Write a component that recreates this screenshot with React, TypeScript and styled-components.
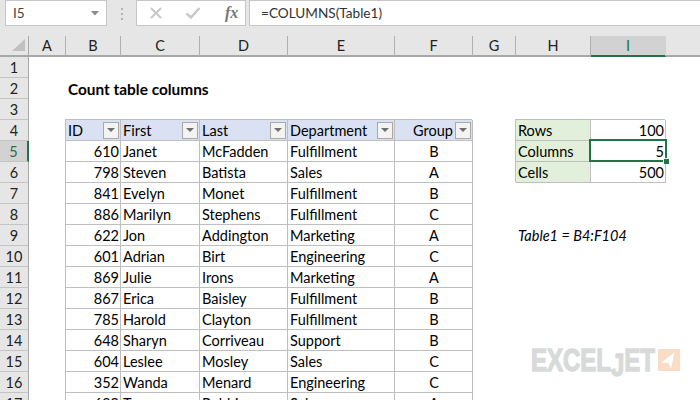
import React from 'react'
import styled, { createGlobalStyle } from 'styled-components'

const GlobalStyle = createGlobalStyle`
    html, body { margin: 0; padding: 0; background: #fff; }
    body { font-family: Lato, "Open Sans", sans-serif; }
`

const Page = styled.div`
    position: relative;
    width: 700px;
    height: 400px;
    overflow: hidden;
    background: #fff;
    color: #000;
    font-size: 14.5px;
`

const Toolbar = styled.div`
    display: flex;
    align-items: flex-start;
    height: 36px;
    padding-left: 5px;
    box-sizing: border-box;
    background: #e6e6e6;
    font-size: 13.6px;
`
const Box = styled.div`
    display: flex;
    align-items: center;
    height: 26px;
    box-sizing: border-box;
    background: #fff;
    border: 1px solid #c6c6c6;
`
const NameBox = styled(Box)`
    width: 102px;
    padding: 0 6px 0 7px;
    justify-content: space-between;
    color: #444;
`
const Dots = styled.div`
    display: flex;
    flex-direction: column;
    gap: 3px;
    width: 2px;
    margin: 8px 13px 0 14px;
    & i { display: block; width: 2px; height: 2px; background: #b4b4b4; }
`
const ActionBox = styled(Box)`
    width: 110px;
    padding-left: 12px;
    box-sizing: border-box;
    gap: 22px;
`
const FxLabel = styled.span`
    margin-left: 2px;
    font: italic bold 16px "Liberation Serif", serif;
    color: #777;
`
const FormulaBox = styled(Box)`
    flex: 1;
    margin-left: 3px;
    padding-left: 11px;
    border-right: 0;
    color: #333;
`

const Sheet = styled.div`
    display: grid;
    grid-template-columns: 29px 37px 55px 79px 88px 107px 78px 43px 75px 75px 1fr;
    grid-auto-rows: 21px;
`
const Corner = styled.div`
    display: flex;
    align-items: flex-end;
    justify-content: flex-end;
    padding: 0 3px 4px 0;
    box-sizing: border-box;
    background: #e6e6e6;
    border-right: 1px solid #a8a8a8;
    border-bottom: 2px solid #a8a8a8;
`
const ColHead = styled.div<{ $active?: boolean }>`
    display: flex;
    align-items: center;
    justify-content: center;
    box-sizing: border-box;
    background: ${p => (p.$active ? '#d2d2d2' : '#e6e6e6')};
    color: ${p => (p.$active ? '#217346' : '#222')};
    border-right: 1px solid ${p => (p.$active ? '#d2d2d2' : '#b0b0b0')};
    border-bottom: 2px solid ${p => (p.$active ? '#217346' : '#a8a8a8')};
`
const ColFill = styled(ColHead)`
    border-right: 0;
`
const RowHead = styled.div<{ $active?: boolean }>`
    display: flex;
    align-items: center;
    justify-content: center;
    box-sizing: border-box;
    background: ${p => (p.$active ? '#d2d2d2' : '#e6e6e6')};
    color: ${p => (p.$active ? '#217346' : '#222')};
    border-right: ${p => (p.$active ? '2px solid #217346' : '1px solid #a8a8a8')};
    border-bottom: 1px solid #c4c4c4;
`
const Cell = styled.div<{ $table?: boolean; $fill?: string; $align?: string }>`
    position: relative;
    display: flex;
    align-items: center;
    justify-content: ${p => p.$align || 'flex-start'};
    padding: 0 2px;
    box-sizing: border-box;
    white-space: nowrap;
    background: ${p => p.$fill || 'transparent'};
    box-shadow: ${p => (p.$table ? '-1px -1px 0 0 #bfbfbf, inset -1px -1px 0 0 #bfbfbf' : 'none')};
`
const Title = styled.span`
    font-size: 15.4px;
    font-weight: 700;
`
const Note = styled.span`
    font-style: italic;
`
const HeadLabel = styled.span<{ $right?: boolean }>`
    flex: 1;
    text-align: ${p => (p.$right ? 'right' : 'left')};
`
const FilterButton = styled.span`
    flex: none;
    display: flex;
    align-items: center;
    justify-content: center;
    width: 16px;
    height: 17px;
    margin: 0 0 1px 2px;
    box-sizing: border-box;
    background: #f3f3f3;
    border: 1px solid #a9a9a9;
    &::after {
        content: '';
        border-left: 4px solid transparent;
        border-right: 4px solid transparent;
        border-top: 4px solid #6e6e6e;
    }
`
const Selection = styled.div`
    position: absolute;
    z-index: 1;
    inset: -2px -1px 0 -2px;
    border: 2px solid #217346;
    &::after {
        content: '';
        position: absolute;
        right: -4px;
        bottom: -4px;
        width: 5px;
        height: 5px;
        background: #217346;
        border-top: 1px solid #fff;
        border-left: 1px solid #fff;
    }
`

const Logo = styled.div`
    position: absolute;
    top: 344px;
    left: 531px;
    display: flex;
    align-items: flex-start;
`
const LogoText = styled.span`
    display: block;
    width: 124px;
    font: 900 32px/33px "Liberation Sans", sans-serif;
    color: #d8dada;
    -webkit-text-stroke: 1.4px #d8dada;
    transform: scaleX(0.75);
    transform-origin: left top;
    white-space: nowrap;
`
const LogoDrop = styled.span`
    position: relative;
    top: 5px;
`
const LogoMark = styled.svg`
    margin: 5px 0 0 3px;
`

const columnLetters = ['A', 'B', 'C', 'D', 'E', 'F', 'G', 'H', 'I']
const headers = ['ID', 'First', 'Last', 'Department', 'Group']
const people: [number, string, string, string, string][] = [
    [610, 'Janet', 'McFadden', 'Fulfillment', 'B'],
    [798, 'Steven', 'Batista', 'Sales', 'A'],
    [841, 'Evelyn', 'Monet', 'Fulfillment', 'B'],
    [886, 'Marilyn', 'Stephens', 'Fulfillment', 'C'],
    [622, 'Jon', 'Addington', 'Marketing', 'A'],
    [601, 'Adrian', 'Birt', 'Engineering', 'C'],
    [869, 'Julie', 'Irons', 'Marketing', 'A'],
    [867, 'Erica', 'Baisley', 'Fulfillment', 'B'],
    [785, 'Harold', 'Clayton', 'Fulfillment', 'B'],
    [648, 'Sharyn', 'Corriveau', 'Support', 'B'],
    [604, 'Leslee', 'Mosley', 'Sales', 'C'],
    [352, 'Wanda', 'Menard', 'Engineering', 'C'],
    [699, 'Tomas', 'Robbins', 'Sales', 'A'],
]
const summary: [string, number][] = [['Rows', 100], ['Columns', 5], ['Cells', 500]]

const tableCells = (row: number) => {
    if (row === 4) {
        return headers.map(h => (
            <Cell key={h} $table $fill="#d9e1f2">
                <HeadLabel $right={h === 'Group'}>{h}</HeadLabel>
                <FilterButton />
            </Cell>
        ))
    }
    const person = people[row - 5]
    return [
        <Cell key="id" $table $align="flex-end">{person[0]}</Cell>,
        <Cell key="first" $table>{person[1]}</Cell>,
        <Cell key="last" $table>{person[2]}</Cell>,
        <Cell key="dept" $table>{person[3]}</Cell>,
        <Cell key="group" $table $align="center">{person[4]}</Cell>,
    ]
}

const summaryCells = (row: number) => {
    const item = summary[row - 4]
    if (!item) return [<Cell key="h" />, <Cell key="i" />]
    return [
        <Cell key="h" $table $fill="#e2efda">{item[0]}</Cell>,
        <Cell key="i" $table $align="flex-end">
            {item[1]}
            {row === 5 && <Selection />}
        </Cell>,
    ]
}

const App: React.FC = () => {
    const rows = Array.from({ length: 17 }, (_, i) => i + 1)
    return (
        <Page>
            <GlobalStyle />
            <Toolbar>
                <NameBox>
                    I5
                    <svg width="9" height="5" viewBox="0 0 9 5"><path d="M0 0h8L4 4.500z" fill="#8a8a8a" /></svg>
                </NameBox>
                <Dots><i /><i /><i /></Dots>
                <ActionBox>
                    <svg width="14" height="14" viewBox="0 0 14 14"><path d="M2 2l10 10M12 2L2 12" stroke="#c8c8c8" strokeWidth="2" fill="none" /></svg>
                    <svg width="16" height="14" viewBox="0 0 16 14"><path d="M1.500 7.500l4.500 4L14.500 2" stroke="#c8c8c8" strokeWidth="2.600" fill="none" /></svg>
                    <FxLabel>fx</FxLabel>
                </ActionBox>
                <FormulaBox>=COLUMNS(Table1)</FormulaBox>
            </Toolbar>
            <Sheet>
                <Corner>
                    <svg width="13" height="12" viewBox="0 0 13 12"><path d="M13 0v12H0z" fill="#c0c0c0" /></svg>
                </Corner>
                {columnLetters.map(c => <ColHead key={c} $active={c === 'I'}>{c}</ColHead>)}
                <ColFill />
                {rows.map(row => (
                    <React.Fragment key={row}>
                        <RowHead $active={row === 5}>{row}</RowHead>
                        <Cell />
                        {row === 2 ? (
                            <>
                                <Cell><Title>Count table columns</Title></Cell>
                                <Cell /><Cell /><Cell /><Cell />
                            </>
                        ) : row >= 4 ? tableCells(row) : [0, 1, 2, 3, 4].map(i => <Cell key={i} />)}
                        <Cell />
                        {row === 9 ? (
                            <>
                                <Cell><Note>Table1 = B4:F104</Note></Cell>
                                <Cell />
                            </>
                        ) : summaryCells(row)}
                        <Cell />
                    </React.Fragment>
                ))}
            </Sheet>
            <Logo>
                <LogoText>EXCEL<LogoDrop>J</LogoDrop>ET</LogoText>
                <LogoMark width="22" height="22" viewBox="0 0 22 22">
                    <rect width="22" height="22" fill="#fbdcc4" />
                    <path d="M16.500 3.500L3.500 13.500l7 .5 2.500 6z" fill="#fff" />
                </LogoMark>
            </Logo>
        </Page>
    )
}

export default App
